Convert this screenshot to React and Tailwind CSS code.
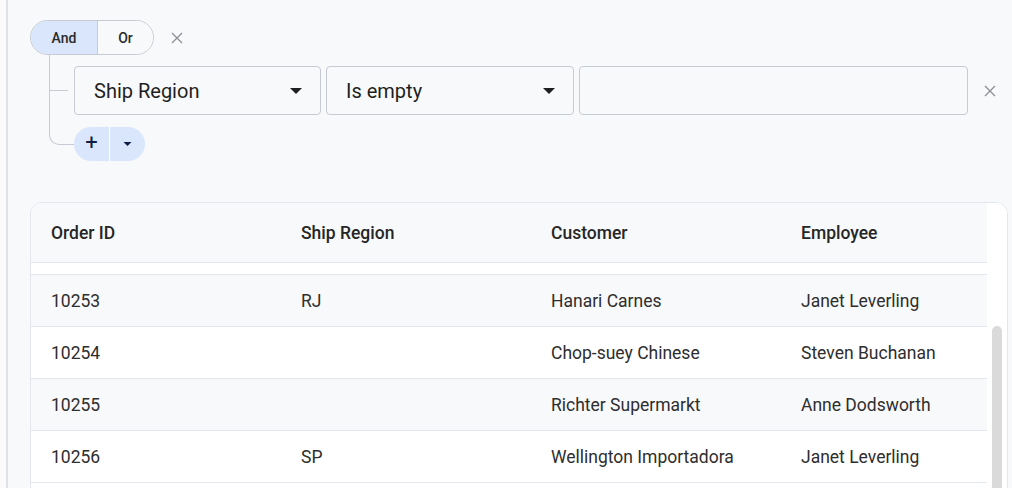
import React from "react";

const rows = [
  { id: "", region: "", customer: "", employee: "", partial: true },
  { id: "10253", region: "RJ", customer: "Hanari Carnes", employee: "Janet Leverling" },
  { id: "10254", region: "", customer: "Chop-suey Chinese", employee: "Steven Buchanan" },
  { id: "10255", region: "", customer: "Richter Supermarkt", employee: "Anne Dodsworth" },
  { id: "10256", region: "SP", customer: "Wellington Importadora", employee: "Janet Leverling" },
];

const Close = ({ className }) => (
  <svg viewBox="0 0 12 12" className={className} fill="none" stroke="currentColor" strokeWidth="1.3">
    <path d="M1 1L11 11M11 1L1 11" />
  </svg>
);

const Caret = ({ className }) => (
  <svg viewBox="0 0 10 5" className={className} fill="currentColor">
    <path d="M0 0H10L5 5Z" />
  </svg>
);

const Select = ({ label, width }) => (
  <div
    className={`${width} h-[49px] shrink-0 flex items-center justify-between rounded-[4px] border border-[#c6cad3] bg-[#f8f9fa] pl-[19px] pr-[18px]`}
  >
    <span className="text-[20px] text-[#1f1f1f]">{label}</span>
    <Caret className="w-[12px] h-[6px] text-[#1f1f1f]" />
  </div>
);

export default function App() {
  return (
    <div className="w-full h-[488px] overflow-hidden flex bg-white" style={{ fontFamily: "Roboto, 'Noto Sans', sans-serif" }}>
      <div className="w-[6px] shrink-0 bg-[#fbfbfc]" />
      <div className="flex-1 min-w-0 border-l-2 border-[#dfe2e9] bg-[#f8f9fa] pl-[22px] pr-[4px] pt-[20px]">
        {/* Filter builder */}
        <div className="flex items-center">
          <div className="inline-flex h-[35px] rounded-full border border-[#c6cad3] overflow-hidden text-[14px] font-medium text-[#2a2a2a]">
            <button className="w-[66px] bg-[#d9e6fb] pt-px">And</button>
            <button className="w-[56px] border-l border-[#c6cad3] bg-[#f8f9fa] pt-px">Or</button>
          </div>
          <Close className="w-[12px] h-[12px] ml-[17px] text-[#8c8f95]" />
        </div>

        <div className="relative ml-[19px] pl-[25px] pt-[11px]">
          <span className="absolute left-0 top-0 w-[25px] h-[90px] border-l border-b border-[#c6cad3] rounded-bl-[10px]" />
          <span className="absolute left-0 top-[35px] w-[19px] border-t border-[#c6cad3]" />

          <div className="flex items-center gap-[5px]">
            <Select label="Ship Region" width="w-[247px]" />
            <Select label="Is empty" width="w-[248px]" />
            <div className="w-[389px] h-[49px] shrink-0 rounded-[4px] border border-[#c6cad3] bg-[#f8f9fa]" />
            <Close className="w-[12px] h-[12px] ml-[11px] text-[#8c8f95]" />
          </div>

          <div className="mt-[12px] inline-flex h-[34px] rounded-full bg-[#d9e6fb] text-[#0d1d45]">
            <button className="w-[35px] flex items-center justify-center text-[22px] leading-none pb-[2px]">+</button>
            <span className="w-px bg-white" />
            <button className="w-[35px] flex items-center justify-center">
              <Caret className="w-[9px] h-[4px]" />
            </button>
          </div>
        </div>

        {/* Grid */}
        <div className="mt-[41px] h-[300px] flex rounded-t-[12px] border border-[#e2e6ee] bg-white overflow-hidden">
          <div className="flex-1 min-w-0 overflow-hidden">
            <div className="flex h-[60px] border-b border-[#e2e6ee] bg-[#f8f9fb] text-[17.5px] font-medium text-[#262626]">
              {["Order ID", "Ship Region", "Customer", "Employee"].map((h) => (
                <div key={h} className="w-[250px] shrink-0 pl-[20px] pt-[2px] flex items-center">
                  {h}
                </div>
              ))}
            </div>
            {rows.map((r, i) => (
              <div
                key={i}
                className={`flex border-b border-[#e2e6ee] text-[17.5px] text-[#2e2e2e] ${
                  r.partial ? "h-[12px]" : "h-[52px]"
                } ${i % 2 === 1 ? "bg-[#f8f9fb]" : "bg-white"}`}
              >
                {[r.id, r.region, r.customer, r.employee].map((c, j) => (
                  <div key={j} className="w-[250px] shrink-0 pl-[20px] pt-[2px] flex items-center">
                    {c}
                  </div>
                ))}
              </div>
            ))}
          </div>
          <div className="w-[20px] shrink-0 bg-white">
            <div className="ml-[5px] mt-[123px] w-[10px] h-[200px] rounded-t-full bg-[#dadada]" />
          </div>
        </div>
      </div>
    </div>
  );
}
